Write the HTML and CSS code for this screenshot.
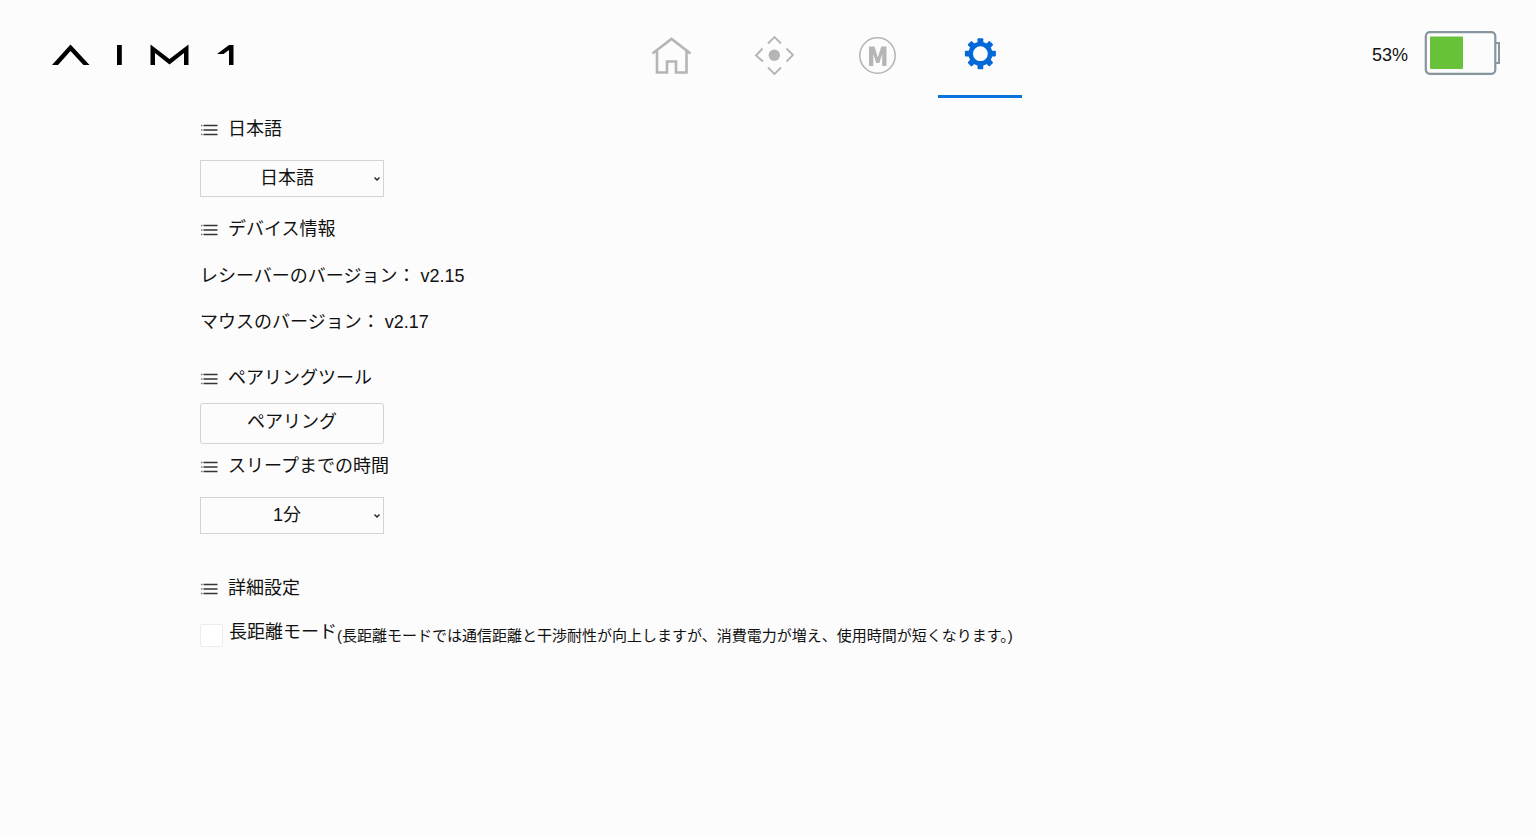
FILE: index.html
```html
<!DOCTYPE html>
<html lang="ja">
<head>
<meta charset="utf-8">
<meta name="viewport" content="width=device-width, initial-scale=1">
<title>AIM1</title>
<link rel="stylesheet" href="styles.css">
</head>
<body>
<svg class="defs" aria-hidden="true">
  <symbol id="list" viewBox="0 0 18 12">
    <path d="M3.500 1.500H17.500M3.500 6H17.500M3.500 10.500H17.500" stroke="#333" stroke-width="1.400"/>
    <path d="M1 1.500H2.500M1 6H2.500M1 10.500H2.500" stroke="#777" stroke-width="1.400"/>
  </symbol>
  <symbol id="chevron" viewBox="0 0 8 6">
    <path d="M1.500 1.500L4 4L6.500 1.500" fill="none" stroke="#222" stroke-width="1.400"/>
  </symbol>
</svg>

<header class="header">
  <div class="logo">
    <svg width="184" height="22" viewBox="0 0 184 22" role="img" aria-label="AIM 1">
      <path d="M0 21L18.500 0.500L37.500 21H31.500L18.500 7L6 21Z"/>
      <path d="M65 1H69.800V21H65Z"/>
      <path d="M98.500 21V0.500L117.500 15L136.500 0.500V21H132V9L117.500 20.500L103 9V21Z"/>
      <path d="M165 10L177 1H181.500V21H177V6L171.500 10Z"/>
    </svg>
  </div>

  <nav class="tabs">
    <a class="tab" href="#home" aria-label="ホーム">
      <svg width="40" height="40" viewBox="0 0 40 40" fill="none" stroke="#b5b5b5" stroke-width="2.600">
        <path d="M1.500 18.500L20.500 4L39.500 18.500"/>
        <path d="M6 16V37.500H16V26.500H25V37.500H35.500V16"/>
      </svg>
    </a>
    <a class="tab" href="#dpi" aria-label="DPI">
      <svg width="40" height="40" viewBox="0 0 40 40" fill="none" stroke="#b5b5b5" stroke-width="1.900">
        <circle cx="20.300" cy="20.200" r="5.700" fill="#b5b5b5" stroke="none"/>
        <path d="M14 8.500L20.500 2L27 8.500M14 32.500L20.500 39L27 32.500M8.500 13.500L2 20.500L9 26.500M32.500 13.500L39 20L32.500 26.500"/>
      </svg>
    </a>
    <a class="tab" href="#macro" aria-label="マクロ">
      <svg width="40" height="40" viewBox="0 0 40 40">
        <circle cx="20.500" cy="20.500" r="17.700" fill="none" stroke="#b5b5b5" stroke-width="1.600"/>
        <path d="M12 31V11.500H17.500L20.800 22.500L24.300 11.500H29.500V31H25.200V19L22.300 28H19.200L16.300 19V31Z" fill="#b5b5b5"/>
      </svg>
    </a>
    <a class="tab tab-active" href="#settings" aria-label="設定" aria-current="page">
      <svg width="40" height="40" viewBox="-20 -20 40 40">
        <g transform="translate(0.400 -1.300)" fill="#0468d7">
          <circle r="9.700" fill="none" stroke="#0468d7" stroke-width="4.600"/>
          <g id="teeth">
            <rect x="-2.900" y="-15.500" width="5.800" height="6" rx="1"/>
            <rect x="-2.900" y="9.500" width="5.800" height="6" rx="1"/>
            <rect x="-15.500" y="-2.900" width="6" height="5.800" rx="1"/>
            <rect x="9.500" y="-2.900" width="6" height="5.800" rx="1"/>
          </g>
          <use href="#teeth" transform="rotate(45)"/>
        </g>
      </svg>
    </a>
  </nav>

  <div class="battery">
    <span class="battery-level">53%</span>
    <svg width="76" height="44" viewBox="0 0 76 44" role="img" aria-label="バッテリー">
      <rect x="1.800" y="1.200" width="69.500" height="41.600" rx="4" fill="#fcfcfc" stroke="#87959e" stroke-width="2.200"/>
      <path d="M71.500 12H75V32H71.500" fill="none" stroke="#87959e" stroke-width="2"/>
      <rect x="6" y="5.500" width="33" height="32.500" rx="1" fill="#67c23a"/>
    </svg>
  </div>
</header>

<main class="settings">
  <section class="section">
    <h2 class="title"><svg class="list-icon"><use href="#list"/></svg><label for="language">日本語</label></h2>
    <div class="select-box">
      <select class="select" id="language"><option>日本語</option></select>
      <svg class="chevron"><use href="#chevron"/></svg>
    </div>
  </section>

  <section class="section section-info">
    <h2 class="title"><svg class="list-icon"><use href="#list"/></svg>デバイス情報</h2>
    <p class="version">レシーバーのバージョン： v2.15</p>
    <p class="version">マウスのバージョン： v2.17</p>
  </section>

  <section class="section section-pairing">
    <h2 class="title"><svg class="list-icon"><use href="#list"/></svg>ペアリングツール</h2>
    <button class="button" type="button">ペアリング</button>
  </section>

  <section class="section section-sleep">
    <h2 class="title"><svg class="list-icon"><use href="#list"/></svg><label for="sleep">スリープまでの時間</label></h2>
    <div class="select-box">
      <select class="select" id="sleep"><option>1分</option></select>
      <svg class="chevron"><use href="#chevron"/></svg>
    </div>
  </section>

  <section class="section">
    <h2 class="title"><svg class="list-icon"><use href="#list"/></svg>詳細設定</h2>
    <div class="option">
      <input class="checkbox" type="checkbox" id="range">
      <label class="option-label" for="range"><span>長距離モード</span><span class="note">(長距離モードでは通信距離と干渉耐性が向上しますが、消費電力が増え、使用時間が短くなります。)</span></label>
    </div>
  </section>
</main>
</body>
</html>
```

FILE: styles.css
```css
* {
  box-sizing: border-box;
}

body {
  margin: 0;
  min-height: 100vh;
  background: #fcfcfc;
  color: #111;
  font: 18px/26px "Liberation Sans", "Noto Sans CJK JP", sans-serif;
}

svg {
  display: block;
  flex: none;
}

.defs {
  display: none;
}

.header {
  display: flex;
  justify-content: space-between;
  align-items: flex-start;
  padding: 0 36px 0 52px;
}

.logo {
  width: 228px;
  padding-top: 44px;
}

.tabs {
  display: flex;
  gap: 19px;
}

.tab {
  display: flex;
  justify-content: center;
  width: 84px;
  height: 98px;
  padding-top: 35px;
  border-bottom: 3px solid transparent;
}

.tab-active {
  border-bottom-color: #0b72da;
}

.battery {
  display: flex;
  align-items: center;
  gap: 16px;
  padding-top: 31px;
}

.battery-level {
  padding-top: 3px;
}

.settings {
  padding: 18px 200px;
}

.section {
  margin-bottom: 19px;
}

.section-info {
  margin-bottom: 30px;
}

.section-pairing {
  margin-bottom: 9px;
}

.section-sleep {
  margin-bottom: 41px;
}

.title {
  display: flex;
  align-items: center;
  gap: 10px;
  margin: 0 0 18px;
  font-size: 18px;
  font-weight: 400;
}

.section-info .title {
  margin-bottom: 21px;
}

.section-pairing .title {
  margin-bottom: 12px;
}

.list-icon {
  width: 18px;
  height: 12px;
  margin-top: 2px;
}

.version {
  margin: 0 0 20px;
}

.select-box {
  position: relative;
  width: 184px;
}

.select,
.button {
  display: block;
  width: 184px;
  border: 1px solid #d3d3d3;
  background: #fcfcfc;
  color: inherit;
  font: inherit;
}

.select {
  appearance: none;
  height: 37px;
  padding: 0 10px 2px 0;
  border-radius: 0;
  text-align: center;
  text-align-last: center;
}

.chevron {
  position: absolute;
  top: 16px;
  right: 3px;
  width: 8px;
  height: 6px;
  pointer-events: none;
}

.button {
  height: 41px;
  padding: 0 0 4px;
  border-radius: 3px;
}

.option {
  display: flex;
  align-items: flex-start;
  gap: 6px;
}

.option-label {
  display: flex;
}

.checkbox {
  appearance: none;
  flex: none;
  width: 23px;
  height: 23px;
  margin: 5px 0 0;
  border: 1px solid #ececec;
  border-radius: 2px;
  background: #fff;
}

.checkbox:checked {
  background: #0468d7;
}

.note {
  padding-top: 4px;
  font-size: 15px;
}
```
